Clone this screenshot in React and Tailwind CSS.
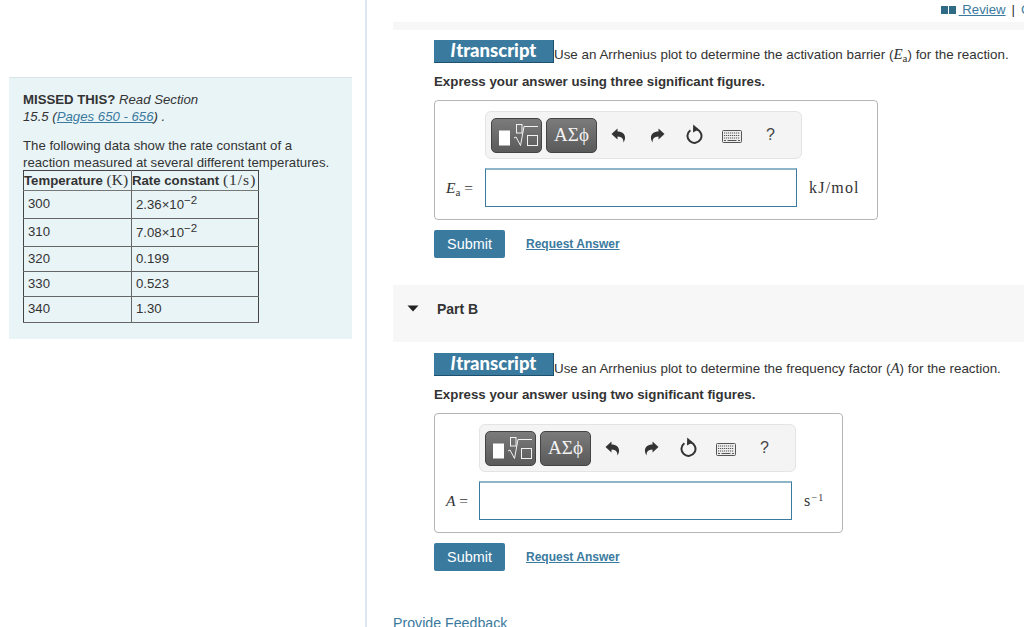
import React from "react";

const sans = "font-['Liberation_Sans',Arial,sans-serif]";
const serif = "font-['Liberation_Serif','Times_New_Roman',serif]";

function TemplateGlyph() {
  return (
    <svg width="46" height="30" viewBox="0 0 46 30" fill="none">
      <rect x="5" y="10.5" width="11" height="15" fill="#fff" />
      <rect x="22.5" y="4.5" width="5.5" height="8.5" stroke="#f2f2f2" strokeWidth="1" />
      <path d="M20 18 L22 17 L26.5 25.5 L30 6.5 H44" stroke="#f2f2f2" strokeWidth="1" />
      <rect x="33.5" y="15.5" width="10" height="10" stroke="#f2f2f2" strokeWidth="1" />
    </svg>
  );
}

function Reply({ flip }) {
  return (
    <svg width="15" height="15" viewBox="0 0 15 15" className={flip ? "-scale-x-100" : ""}>
      <path d="M0.5 6 L6.5 0.5 V3.6 C11 3.6 14.5 6 14 10.5 C13.8 12.2 13 13.6 12.4 14.6 C12.6 11 11 8.8 6.5 8.6 V11.6 Z" fill="#333" />
    </svg>
  );
}

function Reset() {
  return (
    <svg width="18" height="20" viewBox="0 0 18 20" fill="none">
      <path d="M11.5 5.2 A7 7 0 1 1 5.4 6.2" stroke="#333" strokeWidth="2" />
      <path d="M8.2 0.5 L13.8 5.2 L8 8.6 Z" fill="#333" />
    </svg>
  );
}

function Keyboard() {
  return (
    <svg width="20" height="13" viewBox="0 0 20 13" fill="none">
      <rect x="0.5" y="0.5" width="19" height="12" rx="1" fill="#eeeeee" stroke="#555" />
      <path d="M2 3 H18 M2 5.5 H18 M2 8 H18" stroke="#555" strokeWidth="1.2" strokeDasharray="1.2 0.8" />
      <path d="M2 10.5 H4 M5.5 10.5 H14.5 M16 10.5 H18" stroke="#555" strokeWidth="1.2" />
    </svg>
  );
}

function Toolbar({ width }) {
  return (
    <div className="h-[48px] rounded-[6px] border border-[#e4e4e4] bg-[#f4f4f4] flex items-center pl-[5px]" style={{ width }}>
      <div className="w-[51px] h-[35px] rounded-[5px] border border-[#444] bg-gradient-to-b from-[#7b7b7b] to-[#5a5a5a] flex items-center justify-center">
        <TemplateGlyph />
      </div>
      <div className={`ml-[4px] w-[51px] h-[35px] rounded-[5px] border border-[#444] bg-gradient-to-b from-[#7b7b7b] to-[#5a5a5a] flex items-center justify-center text-[#f2f2f2] text-[19px] ${serif}`}>
        ΑΣϕ
      </div>
      <div className="ml-[14px] flex items-center"><Reply /></div>
      <div className="ml-[24px] flex items-center"><Reply flip /></div>
      <div className="ml-[20px] flex items-center mt-[-3px]"><Reset /></div>
      <div className="ml-[19px] flex items-center mt-[2px]"><Keyboard /></div>
      <div className={`ml-[24px] text-[16px] text-[#444] ${sans}`}>?</div>
    </div>
  );
}

function Transcript() {
  return (
    <span className="inline-flex w-[120px] h-[23px] items-center justify-center bg-[#3a7a9e] border-r border-b border-[#1d4f6e] text-white text-[18.5px] font-black font-['Lato',sans-serif] shrink-0">
      <i className="mr-[1px]">l</i>transcript
    </span>
  );
}

function Part({ question, figures, label, toolbarMl, boxW, inputW, labelW, unit, toolW }) {
  return (
    <div className="pl-[41px]">
      <div className="flex items-end h-[23px]">
        <Transcript />
        <span className="text-[13.4px] leading-[16px] text-[#333] whitespace-nowrap mb-[-1px]">{question}</span>
      </div>
      <div className="mt-[9px] text-[13.3px] leading-[19px] font-bold text-[#333]">{figures}</div>
      <div className="mt-[9px] h-[120px] rounded-[4px] border border-[#b5b5b5] pt-[10px]" style={{ width: boxW }}>
        <div style={{ marginLeft: toolbarMl }}>
          <Toolbar width={toolW} />
        </div>
        <div className="mt-[9px] flex items-center">
          <div className={`pl-[11px] text-[15.5px] text-[#333] whitespace-nowrap ${serif}`} style={{ width: labelW }}>{label}</div>
          <div className="h-[39px] border-t-2 border-l border-r border-b border-t-[#8fb5c8] border-l-[#3a7a9e] border-r-[#3a7a9e] border-b-[#3a7a9e] bg-white" style={{ width: inputW }} />
          <div className={`ml-[12px] text-[16px] tracking-[1.2px] text-[#333] ${serif}`}>{unit}</div>
        </div>
      </div>
      <div className="mt-[10px] flex items-center">
        <div className="w-[71px] h-[28px] pt-[1px] rounded-[2px] bg-[#3a7a9e] text-white text-[14.4px] flex items-center justify-center">Submit</div>
        <a className="ml-[21px] text-[12px] font-bold text-[#3a7a9e] underline">Request Answer</a>
      </div>
    </div>
  );
}

function Sup() {
  return <span className="text-[11.5px] leading-none align-[5px]">−2</span>;
}

export default function App() {
  const rows = [
    ["300", <>2.36×10<Sup /></>, "h-[27.5px]"],
    ["310", <>7.08×10<Sup /></>, "h-[28px]"],
    ["320", "0.199", "h-[25.5px]"],
    ["330", "0.523", "h-[25px]"],
    ["340", "1.30", "h-[26px]"],
  ];
  return (
    <div className={`w-[1024px] h-[627px] overflow-hidden bg-white flex ${sans}`}>
      <aside className="w-[367px] shrink-0 h-full border-r-2 border-[#dfe6f3] pt-[77px] pl-[9px]">
        <div className="w-[343px] h-[262px] bg-[#e9f4f7] border-t border-[#d8e4e6] pl-[14px] pt-[14px] text-[#333] text-[13.2px] leading-[16.5px]">
          <p>
            <b>MISSED THIS?</b> <i>Read Section<br />15.5 (<a className="text-[#3a7a9e] underline">Pages 650 - 656</a>) .</i>
          </p>
          <p className="mt-[13px]">
            The following data show the rate constant of a<br />reaction measured at several different temperatures.
          </p>
          <table className="mt-[-1px] border-collapse border border-[#444] text-[#333] w-[236px] table-fixed">
            <tbody>
              <tr className="h-[20px] border-b border-[#777]">
                <th className="w-[108px] border-r border-[#666] text-left font-bold whitespace-nowrap p-0 text-[13.2px]">
                  Temperature <span className={`font-normal text-[15.5px] ${serif}`}>(K)</span>
                </th>
                <th className="text-left font-bold whitespace-nowrap p-0 text-[13.2px]">
                  Rate constant <span className={`font-normal text-[15.5px] tracking-[1px] ${serif}`}>(1/s)</span>
                </th>
              </tr>
              {rows.map(([a, b, h]) => (
                <tr key={a} className={`${h} border-b border-[#666]`}>
                  <td className="border-r border-[#666] pl-[4px] p-0">{a}</td>
                  <td className="pl-[4px] p-0">{b}</td>
                </tr>
              ))}
            </tbody>
          </table>
        </div>
      </aside>
      <main className="flex-1 min-w-0 pl-[26px] overflow-hidden">
        <div className="h-[22px] flex items-center justify-end text-[13.2px] text-[#3a7a9e] whitespace-nowrap pb-[2px]">
          <svg width="15" height="10" viewBox="0 0 15 10">
            <rect x="0" y="1" width="7" height="8" fill="#2f6b85" />
            <rect x="8" y="1" width="7" height="8" fill="#2f6b85" />
          </svg>
          <a className="underline ml-[3px]">&nbsp;Review</a>
          <span className="ml-[6px] text-[#333]">|</span>
          <span className="ml-[6px] w-[3px] overflow-hidden leading-none">G</span>
        </div>
        <div className="h-[8px] bg-[#f7f7f7]" />
        <div className="pt-[10px]">
          <Part
            question={<>Use an Arrhenius plot to determine the activation barrier (<i className={`${serif} text-[15px]`}>E</i><span className={`text-[11px] leading-none align-[-3px] ${serif}`}>a</span>) for the reaction.</>}
            figures="Express your answer using three significant figures."
            label={<><i>E</i><span className="text-[11px] leading-none align-[-3px]">a</span> =</>}
            labelW={50}
            inputW={312}
            boxW={444}
            toolbarMl={50}
            toolW={317}
            unit="kJ/mol"
          />
        </div>
        <div className="mt-[27px] h-[57px] bg-[#f7f7f7] flex items-start pt-[16px] pl-[14px]">
          <svg width="12" height="7" viewBox="0 0 12 7" className="mt-[4px]"><path d="M0.5 0.5 H11.5 L6 6.5 Z" fill="#222" /></svg>
          <span className="ml-[18px] text-[14px] leading-[16px] font-bold text-[#333]">Part B</span>
        </div>
        <div className="pt-[11px]">
          <Part
            question={<>Use an Arrhenius plot to determine the frequency factor (<i className={`${serif} text-[15px]`}>A</i>) for the reaction.</>}
            figures="Express your answer using two significant figures."
            label={<><i>A</i> =</>}
            labelW={44}
            inputW={313}
            boxW={409}
            toolbarMl={44}
            toolW={317}
            unit={<>s<sup className="text-[10px]">−1</sup></>}
          />
        </div>
        <div className="mt-[42px] text-[14.2px] text-[#3a7a9e] whitespace-nowrap">Provide Feedback</div>
      </main>
    </div>
  );
}
